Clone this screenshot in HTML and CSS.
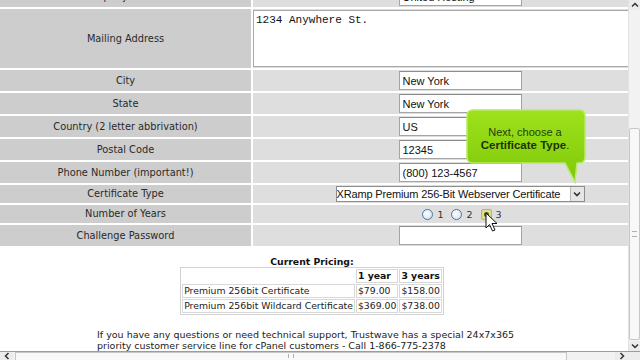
FILE: index.html
```html
<!DOCTYPE html>
<html lang="en">
<head>
  <meta charset="UTF-8">
  <title>SSL Certificate Request</title>
  <link rel="stylesheet" href="styles.css">
</head>
<body>
  <div class="screen">
    <div class="main">
      <div class="page">
        <div class="form-grid">
          <div class="label">Company Division</div>
          <div class="value"><input class="field" type="text" value="United Hosting"></div>

          <div class="label">Mailing Address</div>
          <div class="value wide"><textarea class="address">1234 Anywhere St.</textarea></div>

          <div class="label">City</div>
          <div class="value"><input class="field" type="text" value="New York"></div>

          <div class="label">State</div>
          <div class="value"><input class="field" type="text" value="New York"></div>

          <div class="label">Country (2 letter abbrivation)</div>
          <div class="value"><input class="field" type="text" value="US"></div>

          <div class="label">Postal Code</div>
          <div class="value"><input class="field" type="text" value="12345"></div>

          <div class="label">Phone Number (important!)</div>
          <div class="value"><input class="field" type="text" value="(800) 123-4567"></div>

          <div class="label short">Certificate Type</div>
          <div class="value short">
            <div class="select">
              <span>XRamp Premium 256-Bit Webserver Certificate</span>
              <div class="select-btn">
                <svg width="8" height="6" viewBox="0 0 8 6"><path d="M1 1.5 L4 4.5 L7 1.5" fill="none" stroke="#333" stroke-width="1.6"/></svg>
              </div>
            </div>
          </div>

          <div class="label short">Number of Years</div>
          <div class="value short">
            <div class="radios">
              <span class="radio"></span><span class="num">1</span>
              <span class="radio"></span><span class="num">2</span>
              <span class="radio on"></span><span class="num">3</span>
            </div>
          </div>

          <div class="label">Challenge Password</div>
          <div class="value"><input class="field" type="password" value=""></div>
        </div>

        <div class="pricing">
          <h3>Current Pricing:</h3>
          <table class="price-table">
            <tr><th></th><th>1 year</th><th>3 years</th></tr>
            <tr><td>Premium 256bit Certificate</td><td>$79.00</td><td>$158.00</td></tr>
            <tr><td>Premium 256bit Wildcard Certificate</td><td>$369.00</td><td>$738.00</td></tr>
          </table>
        </div>

        <p class="support">If you have any questions or need technical support, Trustwave has a special 24x7x365<br>priority customer service line for cPanel customers - Call 1-866-775-2378</p>

        <!-- callout over the form -->
        <div class="tip">
          <svg class="tip-shape" width="124" height="76" viewBox="0 0 124 76">
            <defs>
              <linearGradient id="lime" x1="0" y1="0" x2="0" y2="1">
                <stop offset="0" stop-color="#9ee21c"/>
                <stop offset="1" stop-color="#7fc80a"/>
              </linearGradient>
            </defs>
            <path d="M9 2 H115 Q121 2 121 8 V49 Q121 55 115 55 H113 L111 74 L101 55 H9 Q3 55 3 49 V8 Q3 2 9 2 Z" fill="url(#lime)" stroke="#b8ec62" stroke-width="1.5"/>
          </svg>
          <div class="tip-text">Next, choose a<br><b>Certificate Type</b>.</div>
        </div>

        <svg class="cursor" width="13" height="21" viewBox="0 0 13 21">
          <path d="M1 1 V16 L4.5 12.5 L7.5 19 L10 18 L7 11.5 H12 Z" fill="#fff" stroke="#111" stroke-width="1" stroke-linejoin="round"/>
        </svg>
      </div>

      <div class="vscroll">
        <div class="arrow">
          <svg width="8" height="6" viewBox="0 0 8 6"><path d="M1 4.5 L4 1.5 L7 4.5" fill="none" stroke="#333" stroke-width="1.5"/></svg>
        </div>
        <div class="vtrack"><div class="vthumb"><span class="grip"></span></div></div>
        <div class="arrow">
          <svg width="8" height="6" viewBox="0 0 8 6"><path d="M1 1.5 L4 4.5 L7 1.5" fill="none" stroke="#333" stroke-width="1.5"/></svg>
        </div>
      </div>
    </div>

    <div class="hscroll">
      <div class="harrow">
        <svg width="6" height="8" viewBox="0 0 6 8"><path d="M4.5 1 L1.5 4 L4.5 7" fill="none" stroke="#333" stroke-width="1.5"/></svg>
      </div>
      <div class="htrack"><div class="hthumb"><span class="hgrip"></span></div></div>
      <div class="harrow">
        <svg width="6" height="8" viewBox="0 0 6 8"><path d="M1.5 1 L4.5 4 L1.5 7" fill="none" stroke="#333" stroke-width="1.5"/></svg>
      </div>
      <div class="corner"></div>
    </div>
  </div>
</body>
</html>
```

FILE: styles.css
```css
body {
  margin: 0;
  background: #fff;
  font-family: "DejaVu Sans", Verdana, sans-serif;
  font-size: 9.5px;
  color: #222;
}
.screen {
  width: 640px;
  height: 360px;
  display: flex;
  flex-direction: column;
  overflow: hidden;
}
.main {
  display: flex;
  height: 352px;
}
.page {
  position: relative;
  width: 628px;
  overflow: hidden;
}

/* form table */
.form-grid {
  display: grid;
  grid-template-columns: 251px 414px;
  gap: 2px;
  width: 667px;
  margin-top: -14px;
}
.label {
  background: #cdcdcd;
  display: flex;
  align-items: center;
  justify-content: center;
  font-size: 9.8px;
  line-height: 12px;
  color: #2a2a2a;
}
.value {
  background: #dedede;
  display: flex;
  align-items: center;
  justify-content: center;
  padding: 1px 0;
}
.value.short {
  padding: 0;
  height: 18px;
}
.value.wide {
  justify-content: flex-start;
}
.field {
  width: 123px;
  height: 19px;
  box-sizing: border-box;
  border: 1px solid #a4a4a4;
  border-top-color: #8c8c8c;
  background: #fff;
  font: 11px "Liberation Sans", Arial, sans-serif;
  color: #111;
  padding: 0 3px;
  margin: 0;
  outline: none;
}
.address {
  width: 414px;
  height: 57px;
  box-sizing: border-box;
  border: 1px solid #a8a8a8;
  background: #fff;
  font: 11px "Liberation Mono", "Courier New", monospace;
  color: #111;
  padding: 3px 2px;
  margin: 0;
  resize: none;
  outline: none;
}
.select {
  width: 249px;
  height: 16px;
  box-sizing: border-box;
  display: flex;
  border: 1px solid #8e8e8e;
  background: #fff;
}
.select span {
  flex: 1;
  font: 11px "Liberation Sans", Arial, sans-serif;
  line-height: 14px;
  letter-spacing: -0.15px;
  color: #111;
  white-space: nowrap;
  overflow: hidden;
}
.select-btn {
  width: 13px;
  display: flex;
  align-items: center;
  justify-content: center;
  background: #e6e6e6;
  border-left: 1px solid #b8b8b8;
}
.radios {
  display: flex;
  align-items: center;
  gap: 4px;
  margin-left: 8px;
}
.radio {
  width: 9px;
  height: 9px;
  border-radius: 50%;
  border: 1px solid #4a76a8;
  background: radial-gradient(circle at 40% 40%, #fff 0, #e8eef5 50%, #c9d5e3 100%);
}
.radio.on {
  position: relative;
  border-radius: 2px;
  border-color: #cdb04a;
  background: #e3dc98;
}
.radio.on::after {
  content: "";
  position: absolute;
  left: 2px;
  top: 2px;
  width: 5px;
  height: 5px;
  border-radius: 50%;
  background: #3d6b12;
}
.num {
  margin-right: 4px;
  color: #333;
}

/* pricing */
.pricing {
  width: 624px;
  text-align: center;
  padding-top: 10px;
}
.pricing h3 {
  margin: 0;
  font-size: 9.3px;
  line-height: 11px;
  font-weight: bold;
  color: #111;
}
.price-table {
  margin: 0 auto;
  border: 1px solid #d2d2d2;
  border-spacing: 1px;
  empty-cells: hide;
  text-align: left;
}
.price-table th,
.price-table td {
  border: 1px solid #d8d8d8;
  padding: 0 1px;
  line-height: 12px;
  font-size: 9.3px;
  white-space: nowrap;
}
.price-table th {
  font-weight: bold;
  color: #111;
}
.support {
  margin: 14px 0 0 97px;
  line-height: 11px;
  color: #222;
}

/* callout + pointer */
.tip {
  position: absolute;
  left: 464px;
  top: 108px;
  width: 124px;
  height: 76px;
}
.tip-shape {
  position: absolute;
  left: 0;
  top: 0;
}
.tip-text {
  position: relative;
  width: 122px;
  padding-top: 18px;
  text-align: center;
  font: 11px "Liberation Sans", Arial, sans-serif;
  line-height: 13px;
  color: #24400a;
}
.tip-text b {
  font-size: 11.5px;
  color: #1c3303;
}
.cursor {
  position: absolute;
  left: 485px;
  top: 212px;
}

/* fake window scrollbars */
.vscroll {
  width: 12px;
  display: flex;
  flex-direction: column;
  background: #f2f2f2;
  border-left: 1px solid #e2e2e2;
  box-sizing: border-box;
}
.arrow {
  height: 10px;
  display: flex;
  align-items: center;
  justify-content: center;
  background: #ececec;
}
.vtrack {
  flex: 1;
  padding-top: 118px;
}
.vthumb {
  height: 212px;
  box-sizing: border-box;
  border: 1px solid #c6c6c6;
  border-radius: 2px;
  background: #f8f8f8;
  display: flex;
  align-items: center;
  justify-content: center;
}
.grip {
  width: 5px;
  height: 4px;
  border-top: 1px solid #b0b0b0;
  border-bottom: 1px solid #b0b0b0;
}
.hscroll {
  height: 8px;
  display: flex;
  background: #f2f2f2;
  border-top: 1px solid #9c9c9c;
}
.harrow {
  width: 13px;
  display: flex;
  align-items: flex-start;
  justify-content: center;
  background: #ececec;
}
.htrack {
  flex: 1;
  padding: 0 48px 0 2px;
}
.hthumb {
  height: 8px;
  box-sizing: border-box;
  border: 1px solid #c6c6c6;
  border-bottom: none;
  background: #f8f8f8;
  display: flex;
  justify-content: center;
}
.hgrip {
  width: 4px;
  height: 4px;
  margin-top: 1px;
  border-left: 1px solid #b0b0b0;
  border-right: 1px solid #b0b0b0;
}
.corner {
  width: 12px;
  background: #ececec;
}
```
